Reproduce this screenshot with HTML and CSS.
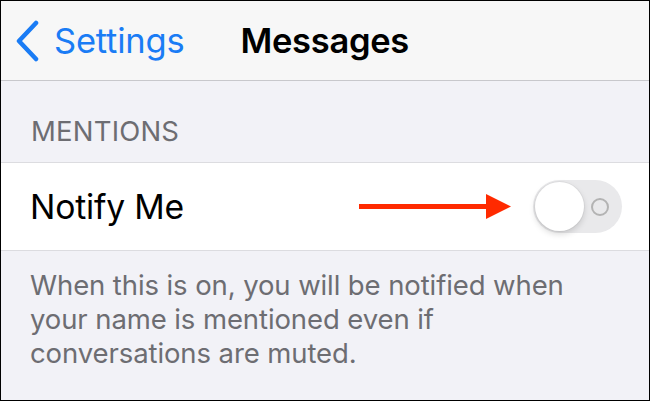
FILE: index.html
```html
<!DOCTYPE html>
<html lang="en">
<head>
    <meta charset="UTF-8">
    <meta name="viewport" content="width=device-width, initial-scale=1.0">
    <title>Messages</title>
    <link rel="stylesheet" href="styles.css">
</head>
<body>

<div class="screen">
    <div class="navbar">
        <a class="back" href="#">
            <svg class="chevron" width="26" height="42" viewBox="0 0 26 42">
                <path d="M22 3 L5 21 L22 39" fill="none" stroke="#1a7cf5" stroke-width="4.5" stroke-linecap="round" stroke-linejoin="round"/>
            </svg>
            <span>Settings</span>
        </a>
        <h1 class="title">Messages</h1>
    </div>

    <div class="section-header">MENTIONS</div>

    <div class="row">
        <span class="row-label">Notify Me</span>
        <svg class="arrow" width="156" height="28" viewBox="0 0 156 28">
            <rect x="0" y="11" width="130" height="5" fill="#ff2a00"/>
            <path d="M127 1 L152 13.5 L127 26 Z" fill="#ff2a00"/>
        </svg>
        <div class="toggle">
            <span class="off-mark"></span>
            <span class="knob"></span>
        </div>
    </div>

    <p class="footer">When this is on, you will be notified when your name is mentioned even if conversations are muted.</p>
</div>

</body>
</html>
```

FILE: styles.css
```css
* {
    box-sizing: border-box;
}
body {
    margin: 0;
    font-family: 'Inter', 'Roboto', sans-serif;
}
.screen {
    width: 650px;
    height: 401px;
    border: 1px solid #000;
    background: #f2f2f7;
    overflow: hidden;
}
.navbar {
    height: 80px;
    background: #f7f7f7;
    border-bottom: 1px solid #c8c8cc;
    display: flex;
    align-items: center;
    padding-left: 13px;
}
.back {
    display: flex;
    align-items: center;
    gap: 14px;
    color: #1a7cf5;
    text-decoration: none;
    font-size: 34.5px;
    letter-spacing: -0.2px;
}
.title {
    margin: 0 0 0 56px;
    font-size: 34.5px;
    font-weight: 600;
    color: #000;
    letter-spacing: -0.3px;
}
.section-header {
    padding: 33px 0 0 30px;
    height: 81px;
    font-size: 27.5px;
    color: #6d6d72;
    letter-spacing: 0.2px;
}
.row {
    height: 89px;
    background: #fff;
    border-top: 1px solid #dcdce0;
    border-bottom: 1px solid #dcdce0;
    display: flex;
    align-items: center;
    padding: 0 27px 0 29px;
}
.row-label {
    font-size: 33.7px;
    color: #000;
    flex: 1;
    letter-spacing: -0.2px;
}
.arrow {
    margin-right: 18px;
}
.toggle {
    position: relative;
    width: 89px;
    height: 53px;
    border-radius: 27px;
    background: #e9e9eb;
}
.knob {
    position: absolute;
    left: 2px;
    top: 2px;
    width: 49px;
    height: 49px;
    border-radius: 50%;
    background: #fff;
    box-shadow: 0 3px 6px rgba(0, 0, 0, 0.15), 0 0 0 1px rgba(0, 0, 0, 0.04);
}
.off-mark {
    position: absolute;
    right: 13px;
    top: 18px;
    width: 18px;
    height: 18px;
    border-radius: 50%;
    border: 2px solid #b3b3b3;
}
.footer {
    margin: 0;
    padding: 17px 50px 0 29px;
    font-size: 27.5px;
    line-height: 34px;
    color: #6d6d72;
    letter-spacing: -0.1px;
}
```
